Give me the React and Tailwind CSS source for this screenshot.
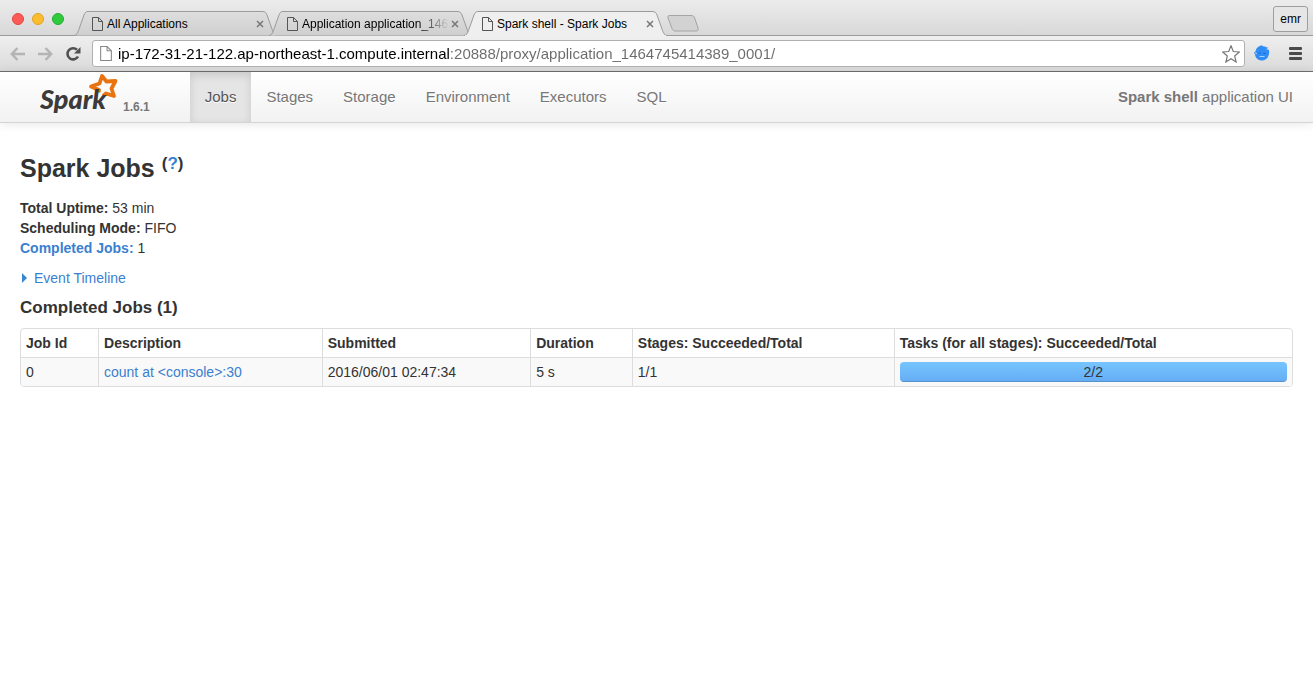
import { useState } from "react";

const TABS = [
  { title: "All Applications" },
  { title: "Application application_146", long: true },
  { title: "Spark shell - Spark Jobs" },
];

const NAV = ["Jobs", "Stages", "Storage", "Environment", "Executors", "SQL"];

const JOBS = [
  {
    id: 0,
    description: "count at <console>:30",
    submitted: "2016/06/01 02:47:34",
    duration: "5 s",
    stages: "1/1",
    done: 2,
    total: 2,
  },
];

const PageIcon = ({ className, color }) => (
  <svg viewBox="0 0 11 14" className={className} fill="none" stroke={color}>
    <path d="M.5.5h6l4 4v9H.5z" />
    <path d="M6.5.5v4h4" />
  </svg>
);

const Tab = ({ title, long, active, onSelect }) => (
  <div
    className={
      "relative -mr-3 flex h-6 w-[207px] items-center pt-px pr-4 pl-[18px] " +
      (active ? "z-10" : "")
    }
  >
    <svg
      viewBox="0 0 207 25"
      className="absolute top-0 left-0 -z-10 h-[25px] w-full"
    >
      <defs>
        <linearGradient id="tabFill" x1="0" y1="0" x2="0" y2="1">
          <stop offset="0" stopColor="#dedede" />
          <stop offset="1" stopColor="#cfcfcf" />
        </linearGradient>
      </defs>
      <path
        d="M0 24.5C3 24 3.500 22 4.500 19.500L10 4C11 1.500 12 .5 14 .5H188C191 .5 192 1.500 193 4L198.500 19.500C199.500 22 200 24 203 24.500"
        fill={active ? "#efefef" : "url(#tabFill)"}
        stroke="#9b9b9b"
      />
      {active && <path d="M1 24.500h201" stroke="#efefef" />}
    </svg>
    <button
      onClick={onSelect}
      className="flex min-w-0 flex-1 items-center gap-1 text-left"
    >
      <PageIcon className="h-[14px] w-[11px] shrink-0" color="#555" />
      <span
        className={
          "flex-1 text-xs whitespace-nowrap " +
          (long
            ? "[mask-image:linear-gradient(to_right,black_115px,transparent_147px)]"
            : "")
        }
      >
        {title}
      </span>
    </button>
    <button aria-label={"Close " + title} className="p-px">
      <svg viewBox="0 0 8 8" className="size-2" stroke="#777" strokeWidth="1.500">
        <path d="M1 1l6 6M7 1L1 7" />
      </svg>
    </button>
  </div>
);

const Browser = () => {
  const [tab, setTab] = useState(2);
  const [url, setUrl] = useState(
    "ip-172-31-21-122.ap-northeast-1.compute.internal:20888/proxy/application_1464745414389_0001/"
  );

  return (
    <header className="text-black">
      <div className="flex h-9 items-start border-b border-[#9b9b9b] bg-linear-to-b from-[#ececec] to-[#d8d8d8]">
        <div className="flex gap-2 pt-[13px] pr-[10px] pl-3">
          <span className="size-3 rounded-full border border-[#e2463f] bg-[#fc5b57]" />
          <span className="size-3 rounded-full border border-[#e1a325] bg-[#fdbc2e]" />
          <span className="size-3 rounded-full border border-[#24ab34] bg-[#30ca3d]" />
        </div>
        <div className="isolate flex pt-[11px]">
          {TABS.map((t, i) => (
            <Tab
              key={t.title}
              title={t.title}
              long={t.long}
              active={tab === i}
              onSelect={() => setTab(i)}
            />
          ))}
          <button aria-label="New tab" className="ml-[7px] self-start pt-1">
            <svg viewBox="0 0 34 17" className="h-[17px] w-[34px]">
              <path
                d="M4 .5H25C27 .5 28 1 28.700 3L32 13C32.500 15 32 16 30 16H10C8 16 7 15.500 6 13.500L2 3C1.500 1.500 2 .5 4 .5Z"
                fill="#d2d2d2"
                stroke="#a5a5a5"
              />
            </svg>
          </button>
        </div>
        <button className="mt-[6px] mr-[5px] ml-auto h-[26px] rounded-[3px] border border-[#9e9e9e] bg-[#e6e6e6] px-[6px] text-xs">
          emr
        </button>
      </div>

      <div className="flex h-9 items-center border-b border-[#6f6f6f] bg-linear-to-b from-[#efefef] to-[#dadada] px-[10px]">
        <button aria-label="Back">
          <svg viewBox="0 0 16 14" className="h-[14px] w-4" fill="none" stroke="#b4b4b4" strokeWidth="2.500">
            <path d="M7.500 1L1.800 7l5.700 6M2 7h13" />
          </svg>
        </button>
        <button aria-label="Forward" className="ml-3">
          <svg viewBox="0 0 16 14" className="h-[14px] w-4" fill="none" stroke="#b4b4b4" strokeWidth="2.500">
            <path d="M7.500 1l5.700 6-5.700 6M13 7H0" />
          </svg>
        </button>
        <button aria-label="Reload" className="ml-[11px]">
          <svg viewBox="0 0 16 16" className="size-4" fill="none" stroke="#505050" strokeWidth="2.600">
            <path d="M12 3.800A5.600 5.600 0 1 0 13 10.500" />
            <path d="M15.500 1v6.500H9z" fill="#505050" stroke="none" />
          </svg>
        </button>
        <div className="ml-[11px] flex h-[27px] flex-1 items-center rounded-[3px] border border-[#b0b0b0] bg-white pr-1 pl-[7px]">
          <PageIcon className="h-[15px] w-3" color="#888" />
          <input
            aria-label="Address"
            value={url}
            onChange={(e) => setUrl(e.target.value)}
            className="ml-[6px] h-6 flex-1 bg-[linear-gradient(to_right,#000_332px,#6b6b6b_332px)] bg-clip-text text-[15px] text-transparent caret-black outline-none"
          />
          <button aria-label="Bookmark">
            <svg viewBox="0 0 18 18" className="size-[18px]" fill="none" stroke="#777" strokeWidth="1.200">
              <path d="M9 .8l2.300 5.700 6 .5-4.600 4 1.400 6L9 13.800 3.900 17l1.400-6L.7 7l6-.5z" />
            </svg>
          </button>
        </div>
        <button aria-label="Extension" className="ml-2">
          <svg viewBox="0 0 18 18" className="size-[18px]">
            <path
              d="M1 7.500L2.500 6.500C3 3 6 .5 9 .5l1.500 1H12l1.500 1 1-.5.5 2.500 1 .5c.8 5-1.500 10.500-7 10.500-4 0-6.500-2.500-7-6z"
              fill="#2f8df5"
            />
            <path d="M6.500 11.500h5M2 8l2 .5M14.500 3l-.5 2" stroke="#a8d2ff" />
            <path d="M5.500 8h2M10.500 8.500h2" stroke="#1b5fc0" />
          </svg>
        </button>
        <button aria-label="Menu" className="ml-[18px]">
          <svg viewBox="0 0 14 14" className="size-[14px]" fill="#4a4a4a">
            <rect x="0" y="0" width="13" height="3" rx="1" />
            <rect x="0" y="5" width="13" height="3" rx="1" />
            <rect x="0" y="10" width="13" height="3" rx="1" />
          </svg>
        </button>
      </div>
    </header>
  );
};

const SparkLogo = () => (
  <svg viewBox="0 0 80 46" className="h-[46px] w-20" role="img" aria-label="Spark">
    <path
      d="M58.500 20.500L59 18 51 14.500 59.500 11.500 62 4 66.500 9.500 75.500 9 71.500 16.500 74 24 66 21.500 63 24"
      fill="none"
      stroke="#e8730f"
      strokeWidth="3.800"
      strokeLinejoin="round"
    />
    <text
      x="0"
      y="37"
      fill="#3c3a3a"
      className="font-[Lato,sans-serif] text-[27px] font-black italic"
    >
      Spark
    </text>
  </svg>
);

const Navbar = () => {
  const [page, setPage] = useState("Jobs");

  return (
    <nav className="flex h-[51px] border-b border-[#d4d4d4] bg-linear-to-b from-white to-[#f2f2f2] pr-5 pl-10 text-[15px] text-[#777] shadow-[0_1px_10px_rgba(0,0,0,0.1)]">
      <a href="#jobs" className="mr-10 flex items-start">
        <SparkLogo />
        <span className="mt-[25px] ml-[3px] text-xs leading-5 font-bold">1.6.1</span>
      </a>
      {NAV.map((name) => (
        <a
          key={name}
          href={"#" + name.toLowerCase()}
          onClick={() => setPage(name)}
          className={
            "px-[15px] pt-[15px] leading-5 [text-shadow:0_1px_0_#fff] " +
            (page === name
              ? "bg-[#e5e5e5] text-[#555] shadow-[inset_0_3px_8px_rgba(0,0,0,0.125)]"
              : "")
          }
        >
          {name}
        </a>
      ))}
      <p className="ml-auto pt-[15px] leading-5">
        <strong>Spark shell</strong> application UI
      </p>
    </nav>
  );
};

const JobTable = () => (
  <div className="overflow-hidden rounded border border-[#ddd]">
    <table className="w-full table-fixed text-left leading-5">
      <colgroup>
        <col className="w-[6.1%]" />
        <col className="w-[17.6%]" />
        <col className="w-[16.400%]" />
        <col className="w-[8%]" />
        <col className="w-[20.600%]" />
        <col />
      </colgroup>
      <thead>
        <tr className="divide-x divide-[#ddd]">
          <th className="px-[5px] py-1">Job Id</th>
          <th className="px-[5px] py-1">Description</th>
          <th className="px-[5px] py-1">Submitted</th>
          <th className="px-[5px] py-1">Duration</th>
          <th className="px-[5px] py-1">Stages: Succeeded/Total</th>
          <th className="px-[5px] py-1">Tasks (for all stages): Succeeded/Total</th>
        </tr>
      </thead>
      <tbody>
        {JOBS.map((job) => (
          <tr
            key={job.id}
            className="divide-x divide-[#ddd] border-t border-[#ddd] bg-[#f9f9f9]"
          >
            <td className="px-[5px] py-1">{job.id}</td>
            <td className="px-[5px] py-1">
              <a href="#job" className="text-[#3a7fd0]">
                {job.description}
              </a>
            </td>
            <td className="px-[5px] py-1">{job.submitted}</td>
            <td className="px-[5px] py-1">{job.duration}</td>
            <td className="px-[5px] py-1">{job.stages}</td>
            <td className="px-[5px] py-1">
              <div className="relative h-5 overflow-hidden rounded bg-[#f0f0f0] text-center">
                <div
                  className="absolute inset-y-0 left-0 bg-linear-to-b from-[#76c5ff] to-[#64acf3] shadow-[inset_0_-1px_0_rgba(0,0,0,0.15)]"
                  style={{ width: (job.done / job.total) * 100 + "%" }}
                />
                <span className="relative">
                  {job.done}/{job.total}
                </span>
              </div>
            </td>
          </tr>
        ))}
      </tbody>
    </table>
  </div>
);

const App = () => {
  return (
    <div className="min-h-screen bg-white font-['Liberation_Sans',Arial,sans-serif] text-sm text-[#333]">
      <Browser />
      <Navbar />
      <main className="px-5 pt-[25px]">
        <h3 className="text-[25px] leading-10 font-bold">
          Spark Jobs{" "}
          <sup className="-top-2 text-[17px] leading-none">
            (<a href="#help" className="text-[#3a7fd0]">?</a>)
          </sup>
        </h3>
        <ul className="mt-[10px] leading-5">
          <li>
            <strong>Total Uptime:</strong> 53 min
          </li>
          <li>
            <strong>Scheduling Mode:</strong> FIFO
          </li>
          <li>
            <a href="#completed" className="font-bold text-[#3a7fd0]">
              Completed Jobs:
            </a>{" "}
            1
          </li>
        </ul>
        <button className="mt-[10px] flex items-center gap-[6px] pl-[2px] leading-5 text-[#3a7fd0]">
          <svg viewBox="0 0 6 10" className="h-[10px] w-[6px]" fill="#3a87d0">
            <path d="M0 0l5 5-5 5z" />
          </svg>
          Event Timeline
        </button>
        <h4 id="completed" className="mt-[10px] mb-[10px] text-[17px] leading-5 font-bold">
          Completed Jobs (1)
        </h4>
        <JobTable />
      </main>
    </div>
  );
};

export default App;
